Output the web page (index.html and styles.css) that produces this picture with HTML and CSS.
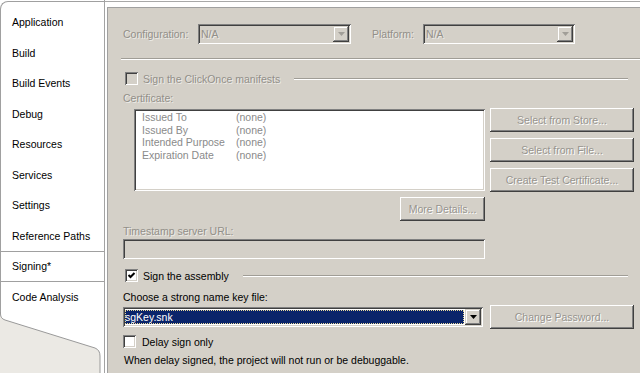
FILE: index.html
```html
<!DOCTYPE html>
<html>
<head>
<meta charset="utf-8">
<link rel="stylesheet" href="styles.css">
</head>
<body>
<div class="app">
  <nav class="sidebar">
    <ul class="tabs">
      <li class="tab">Application</li>
      <li class="tab">Build</li>
      <li class="tab">Build Events</li>
      <li class="tab">Debug</li>
      <li class="tab">Resources</li>
      <li class="tab">Services</li>
      <li class="tab">Settings</li>
      <li class="tab">Reference Paths</li>
      <li class="tab active">Signing*</li>
      <li class="tab">Code Analysis</li>
    </ul>
    <svg class="tabs-foot" width="104" height="61" viewBox="0 0 104 61">
      <path d="M0 0 L0.5 0 L0.5 2 Q0.5 6.5 5 8 L95 36 Q100 38 100 44 L100 61 L0 61 Z" fill="#ebe9e4"/>
      <path d="M0.5 0 L0.5 2 Q0.5 6.5 5 8 L95 36 Q100 38 100 44 L100 61" fill="none" stroke="#9a9a9a" stroke-width="1"/>
    </svg>
  </nav>
  <main class="content">
    <div class="panel">
      <div class="cfg">
        <span class="dis-t cfg-lbl">Configuration:</span>
        <div class="combo dis w153">
          <span class="combo-text dis-t">N/A</span>
          <span class="combo-btn"><svg width="7" height="4" viewBox="0 0 7 4"><polygon points="0,0 7,0 3.5,4" fill="#a19e98"/></svg></span>
        </div>
        <span class="dis-t plat-lbl">Platform:</span>
        <div class="combo dis w152">
          <span class="combo-text dis-t">N/A</span>
          <span class="combo-btn"><svg width="7" height="4" viewBox="0 0 7 4"><polygon points="0,0 7,0 3.5,4" fill="#a19e98"/></svg></span>
        </div>
      </div>
      <div class="sep"></div>
      <div class="ghead">
        <span class="chk dis"></span>
        <span class="ghead-text dis-t">Sign the ClickOnce manifests</span>
        <span class="gline"></span>
      </div>
      <div class="lbl dis-t cert-lbl">Certificate:</div>
      <div class="cert-row">
        <div class="cert-box">
          <div class="cert-grid">
            <span>Issued To</span><span>(none)</span>
            <span>Issued By</span><span>(none)</span>
            <span>Intended Purpose</span><span>(none)</span>
            <span>Expiration Date</span><span>(none)</span>
          </div>
        </div>
        <div class="btn-col">
          <button class="btn" disabled>Select from Store...</button>
          <button class="btn" disabled>Select from File...</button>
          <button class="btn" disabled>Create Test Certificate...</button>
        </div>
      </div>
      <button class="btn more" disabled>More Details...</button>
      <div class="lbl dis-t ts-lbl">Timestamp server URL:</div>
      <div class="input dis"></div>
      <div class="ghead sign">
        <span class="chk"><svg width="9" height="9" viewBox="0 0 9 9"><polyline points="1.5,4 3.5,6 7.5,2" fill="none" stroke="#000" stroke-width="2"/></svg></span>
        <span class="ghead-text">Sign the assembly</span>
        <span class="gline"></span>
      </div>
      <div class="lbl choose">Choose a strong name key file:</div>
      <div class="key-row">
        <div class="combo key">
          <span class="key-sel">sgKey.snk</span>
          <span class="combo-btn"><svg width="7" height="4" viewBox="0 0 7 4"><polygon points="0,0 7,0 3.5,4" fill="#000"/></svg></span>
        </div>
        <button class="btn" disabled>Change Password...</button>
      </div>
      <div class="delay">
        <span class="chk"></span>
        <span class="delay-text">Delay sign only</span>
      </div>
      <div class="lbl note">When delay signed, the project will not run or be debuggable.</div>
    </div>
  </main>
</div>
</body>
</html>
```
FILE: styles.css
```css
* { box-sizing: border-box; margin: 0; padding: 0; }
html, body { width: 640px; height: 373px; overflow: hidden; }
body {
  font-family: "Liberation Sans", Arial, sans-serif;
  font-size: 10.5px;
  background: #fff;
  color: #000;
}
.app { display: flex; height: 373px; }

/* sidebar */
.sidebar {
  width: 105px;
  flex: none;
  display: flex;
  flex-direction: column;
  padding-top: 1px;
  border-right: 1px solid #a3a3a3;
  background: #fff;
}
.tabs {
  list-style: none;
  border-top: 1px solid #a0a0a0;
  border-left: 1px solid #a0a0a0;
  border-top-left-radius: 8px;
  padding-top: 5px;
}
.tab {
  height: 30.5px;
  line-height: 30.5px;
  padding-left: 11px;
  white-space: nowrap;
}
.tab.active {
  border-top: 1px solid #a0a0a0;
  border-bottom: 1px solid #a0a0a0;
  line-height: 28.5px;
}
.tabs-foot { display: block; flex: none; }

/* content */
.content {
  flex: 1;
  margin-top: 1px;
  border-top: 1px solid #a8a8a8;
  padding-top: 5px;
  padding-left: 2px;
  display: flex;
  flex-direction: column;
}
.panel {
  flex: 1;
  background: #d4d0c8;
  border-top: 1px solid #a0a0a0;
  border-left: 1px solid #a0a0a0;
  display: flex;
  flex-direction: column;
  align-items: flex-start;
}
.dis-t { color: #928f88; text-shadow: 1px 1px 0 rgba(255,255,255,0.6); }
.lbl { line-height: 13px; white-space: nowrap; }

.cfg {
  display: flex;
  align-items: center;
  height: 20px;
  margin: 16px 0 0 15px;
}
.cfg-lbl { width: 75px; }
.plat-lbl { margin-left: 21px; width: 51px; }
.w153 { width: 153px; }
.w152 { width: 152px; }

.combo {
  height: 20px;
  display: flex;
  padding: 2px;
  background: #fff;
  box-shadow: inset 1px 1px #808080, inset -1px -1px #fff, inset 2px 2px #404040, inset -2px -2px #d4d0c8;
}
.combo.dis { background: #d4d0c8; }
.combo-text { flex: 1; line-height: 16px; padding-left: 1px; }
.combo-btn {
  width: 16px;
  height: 16px;
  flex: none;
  display: flex;
  align-items: center;
  justify-content: center;
  background: #d4d0c8;
  box-shadow: inset -1px -1px #404040, inset 1px 1px #d4d0c8, inset -2px -2px #808080, inset 2px 2px #fff;
}
.combo-btn svg { display: block; }

.sep {
  width: 519px;
  height: 2px;
  margin: 14px 0 0 13px;
  border-top: 1px solid #a09d96;
  border-bottom: 1px solid #fff;
}

.ghead {
  display: flex;
  align-items: center;
  height: 13px;
  width: 503px;
  margin: 12px 0 0 17px;
}
.ghead.sign { margin-top: 10px; }
.ghead-text { margin-left: 5px; white-space: nowrap; }
.gline {
  flex: 1;
  margin-left: 14px;
  height: 2px;
  border-top: 1px solid #a09d96;
  border-bottom: 1px solid #fff;
}
.chk {
  width: 13px;
  height: 13px;
  flex: none;
  display: flex;
  align-items: center;
  justify-content: center;
  background: #fff;
  box-shadow: inset 1px 1px #808080, inset -1px -1px #fff, inset 2px 2px #404040, inset -2px -2px #d4d0c8;
}
.chk.dis { background: #d4d0c8; }
.chk svg { display: block; }

.cert-lbl { margin: 7px 0 0 15px; }
.cert-row { display: flex; gap: 5px; margin: 3px 0 0 26px; }
.cert-box {
  width: 351px;
  height: 82px;
  margin-top: 1px;
  padding: 2px 0 0 8px;
  background: #fff;
  box-shadow: inset 1px 1px #808080, inset -1px -1px #fff, inset 2px 2px #404040, inset -2px -2px #d4d0c8;
}
.cert-grid {
  display: grid;
  grid-template-columns: 94px auto;
  line-height: 12.5px;
  color: #8a8a8a;
  white-space: nowrap;
}
.btn-col { display: flex; flex-direction: column; gap: 6px; }
.btn {
  width: 144px;
  height: 24px;
  flex: none;
  font: inherit;
  border: none;
  display: flex;
  align-items: center;
  justify-content: center;
  white-space: nowrap;
  background: #d4d0c8;
  color: #97948e;
  text-shadow: 1px 1px 0 #fff;
  box-shadow: inset -1px -1px #404040, inset 1px 1px #fff, inset -2px -2px #808080, inset 2px 2px #d4d0c8;
}
.more { width: 85px; margin: 5px 0 0 292px; }

.ts-lbl { margin: 4px 0 0 15px; }
.input {
  width: 362px;
  height: 20px;
  margin: 1px 0 0 15px;
  background: #d4d0c8;
  box-shadow: inset 1px 1px #808080, inset -1px -1px #fff, inset 2px 2px #404040, inset -2px -2px #d4d0c8;
}

.choose { margin: 9px 0 0 15px; }
.key-row { display: flex; gap: 7px; margin: 1px 0 0 15px; }
.combo.key { width: 360px; margin-top: 2px; }
.key-sel {
  flex: 1;
  margin: 1px 1px 1px 0;
  background: #0a246a;
  color: #fff;
  line-height: 14px;
  outline: 1px dotted #e8d89a;
  outline-offset: -1px;
  white-space: nowrap;
}

.delay {
  display: flex;
  align-items: center;
  height: 13px;
  margin: 6px 0 0 15px;
}
.delay-text { margin-left: 6px; white-space: nowrap; }
.note { margin: 6px 0 0 16px; }
```
